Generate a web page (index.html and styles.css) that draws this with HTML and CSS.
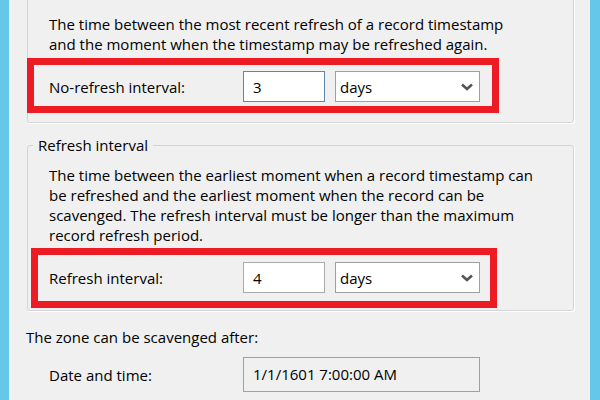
FILE: index.html
```html
<!DOCTYPE html>
<html lang="en">
<head>
    <meta charset="UTF-8">
    <meta name="viewport" content="width=device-width, initial-scale=1.0">
    <title>Aging/Scavenging Properties</title>
    <link rel="stylesheet" href="styles.css">
</head>
<body>
    <div class="dialog">
        <fieldset class="group group-top">
            <p class="note">The time between the most recent refresh of a record timestamp<br>and the moment when the timestamp may be refreshed again.</p>
            <div class="highlight">
                <label class="field-label" for="noRefresh">No-refresh interval:</label>
                <input type="text" id="noRefresh" class="num-input focused" value="3">
                <div class="combo">
                    <span>days</span>
                    <svg class="chevron" width="12" height="8" viewBox="0 0 12 8"><path d="M1 1.5 L6 6 L11 1.5" fill="none" stroke="#555" stroke-width="2.6"/></svg>
                </div>
            </div>
        </fieldset>

        <fieldset class="group">
            <legend>Refresh interval</legend>
            <p class="note">The time between the earliest moment when a record timestamp can<br>be refreshed and the earliest moment when the record can be<br>scavenged. The refresh interval must be longer than the maximum<br>record refresh period.</p>
            <div class="highlight highlight-second">
                <label class="field-label" for="refresh">Refresh interval:</label>
                <input type="text" id="refresh" class="num-input" value="4">
                <div class="combo">
                    <span>days</span>
                    <svg class="chevron" width="12" height="8" viewBox="0 0 12 8"><path d="M1 1.5 L6 6 L11 1.5" fill="none" stroke="#555" stroke-width="2.6"/></svg>
                </div>
            </div>
        </fieldset>

        <p class="after">The zone can be scavenged after:</p>
        <div class="date-row">
            <span class="field-label">Date and time:</span>
            <div class="date-box">1/1/1601 7:00:00 AM</div>
        </div>
    </div>
</body>
</html>
```

FILE: styles.css
```css
html, body {
    margin: 0;
    height: 100%;
}
body {
    background-color: #63c8ea;
    overflow: hidden;
    font-family: "Open Sans", Arial, sans-serif;
    font-size: 15px;
    line-height: 20px;
    color: #000;
}
.dialog {
    margin-left: 9px;
    width: 581px;
    height: 400px;
    background-color: #f0f0f0;
    overflow: hidden;
}
.group {
    margin: 12px 16px 0 18px;
    padding: 10px 0 2px 21px;
    border: 1px solid #d5d5d5;
    border-radius: 3px;
    box-shadow: 1px 1px 0 #fff;
    min-width: 0;
}
.group-top {
    margin-top: -30px;
    padding-top: 43px;
    padding-bottom: 9px;
}
.group legend {
    margin-left: -16px;
    padding: 0 5px;
}
.note {
    margin: 0;
    white-space: nowrap;
}
.highlight {
    display: flex;
    align-items: center;
    width: 472px;
    margin: 4px 0 0 -22px;
    padding: 6px 0 4px 15px;
    border: 7px solid #ed1c24;
    box-sizing: border-box;
}
.highlight-second {
    width: 466px;
    margin: 3px 0 0 -18px;
    padding: 7px 0 8px 11px;
}
.field-label {
    width: 194px;
    flex-shrink: 0;
}
.num-input {
    width: 82px;
    height: 31px;
    box-sizing: border-box;
    margin: 0;
    padding: 0 0 0 9px;
    border: 1px solid #a9a9a9;
    background-color: #fff;
    font: inherit;
    color: #000;
    outline: none;
}
.num-input.focused {
    border-color: #5c85b0;
}
.combo {
    display: flex;
    align-items: center;
    justify-content: space-between;
    width: 145px;
    height: 31px;
    box-sizing: border-box;
    margin-left: 10px;
    padding: 0 6px 0 4px;
    border: 1px solid #a0a0a0;
    background-color: #fff;
}
.after {
    margin: 16px 0 0 17px;
}
.date-row {
    display: flex;
    align-items: center;
    margin-top: 10px;
    padding-left: 40px;
}
.date-box {
    width: 237px;
    height: 35px;
    box-sizing: border-box;
    padding: 6px 0 0 9px;
    border: 1px solid #a0a0a0;
}
```
